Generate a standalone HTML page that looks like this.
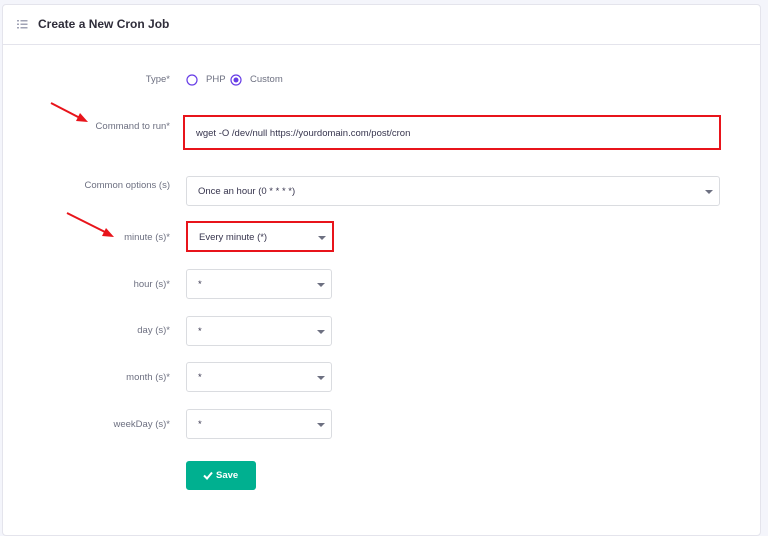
<!DOCTYPE html>
<html><head><style>
body{margin:0;width:768px;height:505px;background:#f4f5fb;font-family:"Liberation Sans",sans-serif;position:relative;overflow:hidden;color:#36344d}
.card{position:absolute;left:2px;top:4px;width:757px;height:530px;background:#fff;border:1px solid #e4e4ec;border-radius:4px}
.hdr{position:absolute;left:0;top:0;width:757px;height:39px;border-bottom:1px solid #e4e4ec}
.hdr span{position:absolute;left:35px;top:12px;font-size:12px;font-weight:bold;color:#2f2d3a}
.lbl{position:absolute;right:598px;font-size:9.5px;color:#6d7081;text-align:right;white-space:nowrap}
.sel{position:absolute;left:186px;background:#fff;border:1px solid #dadce0;border-radius:3px;box-sizing:border-box;font-size:9.5px;color:#36344d}
.sel span{position:absolute;left:11px}
.sel i{position:absolute;right:6px;width:0;height:0;border-left:4px solid transparent;border-right:4px solid transparent;border-top:4px solid #6d7081}
.red{border:2px solid #e8141b!important;border-radius:0}
</style></head><body>
<div class="card"><div class="hdr">
<svg style="position:absolute;left:14px;top:14px" width="11" height="10"><g fill="#a0a3b5"><rect x="0" y="1" width="2" height="1.5"/><rect x="0" y="4.5" width="2" height="1.5"/><rect x="0" y="8" width="2" height="1.5"/><rect x="3.5" y="1" width="7" height="1.5"/><rect x="3.5" y="4.5" width="7" height="1.5"/><rect x="3.5" y="8" width="7" height="1.5"/></g></svg>
<span>Create a New Cron Job</span></div></div>

<div class="lbl" style="top:74px">Type*</div>
<svg style="position:absolute;left:185px;top:73px" width="14" height="14"><circle cx="7" cy="7" r="5" fill="none" stroke="#673de6" stroke-width="1.2"/></svg>
<div style="position:absolute;left:206px;top:74px;font-size:9.5px;color:#6d7081">PHP</div>
<svg style="position:absolute;left:229px;top:73px" width="14" height="14"><circle cx="7" cy="7" r="5" fill="none" stroke="#673de6" stroke-width="1.2"/><circle cx="7" cy="7" r="2.5" fill="#673de6"/></svg>
<div style="position:absolute;left:250px;top:74px;font-size:9.5px;color:#6d7081">Custom</div>

<div class="lbl" style="top:121px">Command to run*</div>
<div class="sel red" style="left:183px;top:115px;width:538px;height:35px"><span style="top:11px">wget -O /dev/null https://yourdomain.com/post/cron</span></div>

<div class="lbl" style="top:180px">Common options (s)</div>
<div class="sel" style="top:176px;width:534px;height:30px"><span style="top:9px">Once an hour (0 * * * *)</span><i style="top:13px"></i></div>

<div class="lbl" style="top:232px">minute (s)*</div>
<div class="sel red" style="top:221px;width:148px;height:31px"><span style="top:9px">Every minute (*)</span><i style="top:13px"></i></div>

<div class="lbl" style="top:279px">hour (s)*</div>
<div class="sel" style="top:269px;width:146px;height:30px"><span style="top:9px">*</span><i style="top:13px"></i></div>
<div class="lbl" style="top:325px">day (s)*</div>
<div class="sel" style="top:316px;width:146px;height:30px"><span style="top:9px">*</span><i style="top:13px"></i></div>
<div class="lbl" style="top:372px">month (s)*</div>
<div class="sel" style="top:362px;width:146px;height:30px"><span style="top:9px">*</span><i style="top:13px"></i></div>
<div class="lbl" style="top:419px">weekDay (s)*</div>
<div class="sel" style="top:409px;width:146px;height:30px"><span style="top:9px">*</span><i style="top:13px"></i></div>

<div style="position:absolute;left:186px;top:461px;width:70px;height:29px;background:#00b090;border-radius:3px;color:#fff;font-size:9.5px;font-weight:bold">
<svg style="position:absolute;left:17px;top:10px" width="10" height="9"><path d="M1 4.5L4 7.5L9 1.5" fill="none" stroke="#fff" stroke-width="2"/></svg>
<span style="position:absolute;left:30px;top:9px">Save</span></div>

<svg style="position:absolute;left:0;top:0" width="768" height="505">
<g stroke="#e8141b" stroke-width="2" fill="#e8141b">
<line x1="51" y1="103" x2="80" y2="118"/><path d="M88 122L76 121L80 113Z" stroke="none"/>
<line x1="67" y1="213" x2="107" y2="233"/><path d="M114 237L102 236L106 228Z" stroke="none"/>
</g></svg>
</body></html>
